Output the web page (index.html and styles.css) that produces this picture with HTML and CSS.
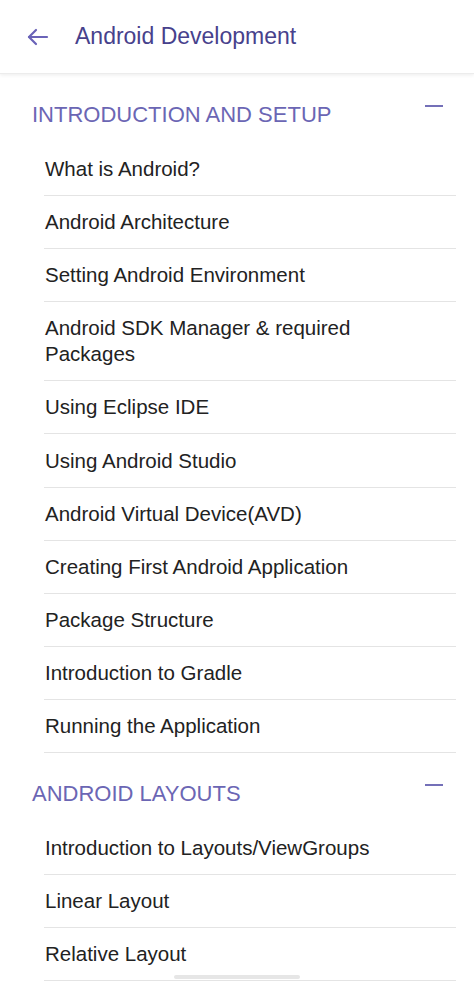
FILE: index.html
```html
<!DOCTYPE html>
<html lang="en">
<head>
    <meta charset="UTF-8">
    <meta name="viewport" content="width=device-width, initial-scale=1.0">
    <title>Android Development</title>
    <link rel="stylesheet" href="styles.css">
</head>
<body>

    <!-- Верхня панель -->
    <header class="topbar">
        <button class="back-btn" aria-label="Back">
            <svg width="24" height="24" viewBox="0 0 24 24" fill="none" stroke="#6a63b8" stroke-width="2.2" stroke-linecap="round" stroke-linejoin="round">
                <path d="M21 12H3"/>
                <path d="M10 5L3 12l7 7"/>
            </svg>
        </button>
        <h1 class="topbar-title">Android Development</h1>
    </header>

    <!-- Розділи курсу -->
    <div class="section">
        <div class="section-head">
            <h2>INTRODUCTION AND SETUP</h2>
            <span class="collapse"></span>
        </div>
        <ul class="lessons">
            <li>What is Android?</li>
            <li>Android Architecture</li>
            <li>Setting Android Environment</li>
            <li>Android SDK Manager &amp; required Packages</li>
            <li>Using Eclipse IDE</li>
            <li>Using Android Studio</li>
            <li>Android Virtual Device(AVD)</li>
            <li>Creating First Android Application</li>
            <li>Package Structure</li>
            <li>Introduction to Gradle</li>
            <li>Running the Application</li>
        </ul>
    </div>

    <div class="section">
        <div class="section-head">
            <h2>ANDROID LAYOUTS</h2>
            <span class="collapse"></span>
        </div>
        <ul class="lessons">
            <li>Introduction to Layouts/ViewGroups</li>
            <li>Linear Layout</li>
            <li>Relative Layout</li>
        </ul>
    </div>

    <div class="home-indicator"></div>

</body>
</html>
```

FILE: styles.css
```css
body {
    margin: 0;
    font-family: "Liberation Sans", Arial, sans-serif;
    background-color: #fff;
    color: #222;
    overflow: hidden;
}

.topbar {
    display: flex;
    align-items: center;
    height: 73px;
    padding-left: 26px;
    background-color: #fff;
    box-shadow: 0 1px 4px rgba(0, 0, 0, 0.08);
    border-bottom: 1px solid #ececec;
}

.back-btn {
    display: flex;
    padding: 0;
    border: none;
    background: none;
    width: 24px;
    height: 24px;
}

.topbar-title {
    margin: 0 0 0 25px;
    font-size: 23px;
    font-weight: normal;
    color: #47418c;
}

.section-head {
    display: flex;
    align-items: center;
    justify-content: space-between;
    padding: 28px 31px 15px 32px;
}

.section-head h2 {
    margin: 0;
    font-size: 22px;
    line-height: 26px;
    font-weight: normal;
    color: #6b66b4;
}

.collapse {
    width: 18px;
    height: 1.5px;
    background-color: #7470b8;
    margin-top: -18px;
}

.lessons {
    list-style: none;
    margin: 0 18px 0 44px;
    padding: 0;
}

.lessons li {
    padding: 13.1px 60px 13px 1px;
    font-size: 20.5px;
    line-height: 26px;
    border-bottom: 1px solid #e4e4e4;
}

.home-indicator {
    position: fixed;
    left: 174px;
    bottom: 9px;
    width: 126px;
    height: 4px;
    border-radius: 2px;
    background-color: #e6e6e6;
}
```
